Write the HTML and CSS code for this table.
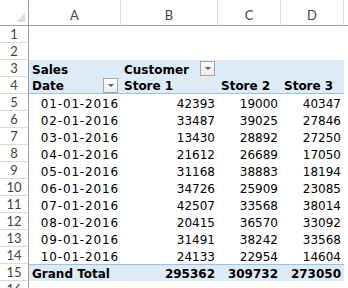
FILE: index.html
```html
<!DOCTYPE html>
<html>
<head>
<meta charset="utf-8">
<link rel="stylesheet" href="styles.css">
</head>
<body>
<div class="sheet">
  <div class="corner"><span class="tri"></span></div>
  <div class="ch">A</div><div class="ch">B</div><div class="ch">C</div><div class="ch">D</div><div class="ch edge"></div>

  <div class="rh">1</div><div class="c"></div><div class="c"></div><div class="c"></div><div class="c"></div><div class="c"></div>
  <div class="rh">2</div><div class="c"></div><div class="c"></div><div class="c"></div><div class="c"></div><div class="c"></div>

  <div class="rh">3</div>
  <div class="c piv b">Sales</div>
  <div class="c piv b">Customer<span class="dd"></span></div>
  <div class="c piv"></div><div class="c piv"></div><div class="c"></div>

  <div class="rh">4</div>
  <div class="c piv hb b">Date<span class="dd"></span></div>
  <div class="c piv hb b">Store 1</div>
  <div class="c piv hb b">Store 2</div>
  <div class="c piv hb b">Store 3</div>
  <div class="c"></div>

  <div class="rh">5</div><div class="c r dt">01-01-2016</div><div class="c r">42393</div><div class="c r">19000</div><div class="c r">40347</div><div class="c"></div>
  <div class="rh">6</div><div class="c r dt">02-01-2016</div><div class="c r">33487</div><div class="c r">39025</div><div class="c r">27846</div><div class="c"></div>
  <div class="rh">7</div><div class="c r dt">03-01-2016</div><div class="c r">13430</div><div class="c r">28892</div><div class="c r">27250</div><div class="c"></div>
  <div class="rh">8</div><div class="c r dt">04-01-2016</div><div class="c r">21612</div><div class="c r">26689</div><div class="c r">17050</div><div class="c"></div>
  <div class="rh">9</div><div class="c r dt">05-01-2016</div><div class="c r">31168</div><div class="c r">38883</div><div class="c r">18194</div><div class="c"></div>
  <div class="rh">10</div><div class="c r dt">06-01-2016</div><div class="c r">34726</div><div class="c r">25909</div><div class="c r">23085</div><div class="c"></div>
  <div class="rh">11</div><div class="c r dt">07-01-2016</div><div class="c r">42507</div><div class="c r">33568</div><div class="c r">38014</div><div class="c"></div>
  <div class="rh">12</div><div class="c r dt">08-01-2016</div><div class="c r">20415</div><div class="c r">36570</div><div class="c r">33092</div><div class="c"></div>
  <div class="rh">13</div><div class="c r dt">09-01-2016</div><div class="c r">31491</div><div class="c r">38242</div><div class="c r">33568</div><div class="c"></div>
  <div class="rh">14</div><div class="c r dt">10-01-2016</div><div class="c r">24133</div><div class="c r">22954</div><div class="c r">14604</div><div class="c"></div>

  <div class="rh">15</div>
  <div class="c piv tb b">Grand Total</div>
  <div class="c piv tb b r">295362</div>
  <div class="c piv tb b r">309732</div>
  <div class="c piv tb b r">273050</div>
  <div class="c"></div>

  <div class="rh">16</div><div class="c"></div><div class="c"></div><div class="c"></div><div class="c"></div><div class="c"></div>
</div>
</body>
</html>
```

FILE: styles.css
```css
html, body {
  margin: 0;
  padding: 0;
  background: #ffffff;
}

.sheet {
  display: grid;
  grid-template-columns: 29px 92px 97px 63px 63px 4px;
  grid-template-rows: 26px repeat(16, 17px);
  width: 348px;
  height: 288px;
  overflow: hidden;
  font-family: "DejaVu Sans", Verdana, sans-serif;
  font-size: 12px;
  color: #000000;
}

.sheet > div {
  box-sizing: border-box;
  min-width: 0;
}

.corner {
  border-right: 1px solid #9e9e9e;
  border-bottom: 1px solid #9e9e9e;
  position: relative;
}

.tri {
  position: absolute;
  right: 3px;
  bottom: 3px;
  width: 0;
  height: 0;
  border-left: 9px solid transparent;
  border-bottom: 9px solid #dcdcdc;
}

.ch {
  display: flex;
  align-items: flex-end;
  justify-content: center;
  padding-bottom: 3px;
  border-right: 1px solid #d8d8d8;
  border-bottom: 1px solid #9e9e9e;
  font-family: Lato, "Liberation Sans", sans-serif;
  font-size: 13px;
  line-height: 14px;
  color: #444444;
}

.ch.edge {
  border-right: none;
}

.rh {
  display: flex;
  align-items: flex-end;
  justify-content: center;
  padding-bottom: 1px;
  border-right: 1px solid #9e9e9e;
  border-bottom: 1px solid #dadada;
  font-family: Lato, "Liberation Sans", sans-serif;
  font-size: 13px;
  line-height: 14px;
  color: #444444;
}

.c {
  display: flex;
  align-items: flex-end;
  padding: 0 3px 0 3px;
  line-height: 14px;
  white-space: nowrap;
}

.r {
  justify-content: flex-end;
}

.dt {
  letter-spacing: 0.85px;
  padding-right: 2px;
}

.b {
  font-weight: bold;
}

.piv {
  background: #ddebf7;
}

.hb {
  border-bottom: 1px solid #9bc2e6;
}

.tb {
  border-top: 1px solid #9bc2e6;
}

.dd {
  align-self: center;
  margin-left: auto;
  width: 15px;
  height: 15px;
  box-sizing: border-box;
  border: 1px solid #a6a6a6;
  background: linear-gradient(#ffffff, #ececec);
  display: flex;
  align-items: center;
  justify-content: center;
}

.dd::after {
  content: "";
  width: 0;
  height: 0;
  border-left: 3px solid transparent;
  border-right: 3px solid transparent;
  border-top: 3px solid #5f5f5f;
}
```
